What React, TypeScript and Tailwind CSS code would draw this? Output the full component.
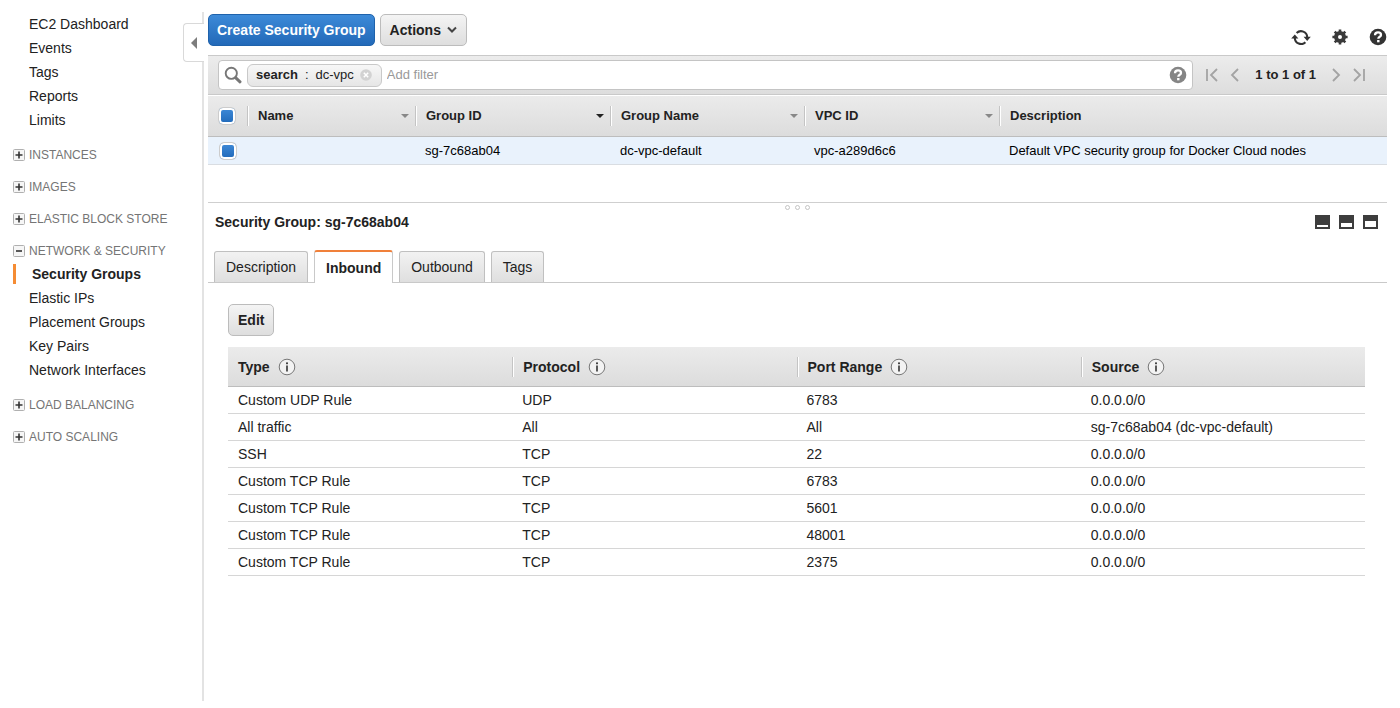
import { useState } from 'react';
import type { ReactNode } from 'react';

const dashboardLinks = ['EC2 Dashboard', 'Events', 'Tags', 'Reports', 'Limits'];

const sections = [
  { title: 'INSTANCES', links: [] },
  { title: 'IMAGES', links: [] },
  { title: 'ELASTIC BLOCK STORE', links: [] },
  {
    title: 'NETWORK & SECURITY',
    links: ['Security Groups', 'Elastic IPs', 'Placement Groups', 'Key Pairs', 'Network Interfaces'],
  },
  { title: 'LOAD BALANCING', links: [] },
  { title: 'AUTO SCALING', links: [] },
];

const groupColumns = [
  { label: 'Name', width: 'w-[168px]', sorted: false },
  { label: 'Group ID', width: 'w-[195px]', sorted: true },
  { label: 'Group Name', width: 'w-[194px]', sorted: false },
  { label: 'VPC ID', width: 'w-[195px]', sorted: false },
  { label: 'Description', width: '', sorted: null },
];

const groupRow = [
  '',
  'sg-7c68ab04',
  'dc-vpc-default',
  'vpc-a289d6c6',
  'Default VPC security group for Docker Cloud nodes',
];

const tabs = ['Description', 'Inbound', 'Outbound', 'Tags'];

const rules = [
  ['Custom UDP Rule', 'UDP', '6783', '0.0.0.0/0'],
  ['All traffic', 'All', 'All', 'sg-7c68ab04 (dc-vpc-default)'],
  ['SSH', 'TCP', '22', '0.0.0.0/0'],
  ['Custom TCP Rule', 'TCP', '6783', '0.0.0.0/0'],
  ['Custom TCP Rule', 'TCP', '5601', '0.0.0.0/0'],
  ['Custom TCP Rule', 'TCP', '48001', '0.0.0.0/0'],
  ['Custom TCP Rule', 'TCP', '2375', '0.0.0.0/0'],
];

const ToggleIcon = ({ open }: { open: boolean }) => (
  <svg width="12" height="12" viewBox="0 0 12 12" fill="none">
    <rect x="0.5" y="0.5" width="11" height="11" rx="1" fill="#f6f6f6" stroke="#b0b0b0" />
    <path d={open ? 'M3 6h6' : 'M2.5 6h7M6 2.5v7'} stroke="#333" strokeWidth="1.6" />
  </svg>
);

const RefreshIcon = () => (
  <svg width="20" height="16" viewBox="0 0 20 16" fill="none">
    <path d="M5.6 4A6.2 6.2 0 0 1 16.2 8.2M14.4 13.2A6.2 6.2 0 0 1 3.8 9" stroke="#333" strokeWidth="2.1" />
    <path d="M12.6 7.8h7.2l-3.6 4.2zM.2 9.6h7.2L3.8 5.4z" fill="#333" />
  </svg>
);

const GearIcon = () => (
  <svg width="16" height="16" viewBox="0 0 16 16" fill="none">
    <circle cx="8" cy="8" r="4" stroke="#3a3a3a" strokeWidth="4" />
    <path
      d="M8 .4v3M8 12.6v3M.4 8h3M12.6 8h3M2.7 2.7l2 2M11.3 11.3l2 2M13.3 2.7l-2 2M4.7 11.3l-2 2"
      stroke="#3a3a3a"
      strokeWidth="2.6"
    />
  </svg>
);

const HelpIcon = ({ color }: { color: string }) => (
  <svg width="18" height="18" viewBox="0 0 18 18" fill="none">
    <circle cx="9" cy="9" r="8.3" fill={color} />
    <path d="M6 7.2C6 5.3 7.3 4.4 9 4.4s3 .9 3 2.5c0 1.9-2.7 1.9-2.7 3.9" stroke="#fff" strokeWidth="2.3" />
    <rect x="8.1" y="12" width="2.4" height="2.3" fill="#fff" />
  </svg>
);

const SearchIcon = () => (
  <svg width="18" height="18" viewBox="0 0 18 18" fill="none" className="shrink-0">
    <circle cx="7.3" cy="7.3" r="5.6" stroke="#777" strokeWidth="1.9" />
    <path d="M11.8 11.8l4.2 4" stroke="#777" strokeWidth="3" strokeLinecap="round" />
  </svg>
);

const InfoIcon = () => (
  <svg width="18" height="18" viewBox="0 0 18 18" fill="none">
    <circle cx="9" cy="9" r="7.8" fill="#f3f3f3" stroke="#777" />
    <path d="M9 7.4v6" stroke="#333" strokeWidth="1.6" />
    <rect x="8.1" y="4.4" width="1.8" height="1.8" fill="#333" />
  </svg>
);

// Panel layout glyph, `top` is where the lower pane starts
const PaneIcon = ({ top }: { top: number }) => (
  <svg width="15" height="14" viewBox="0 0 15 14">
    <path d="M0 0h15v14H0z" fill="#3d3d3d" />
    <path d={`M2 ${top}h11V12H2z`} fill="#fff" />
  </svg>
);

const PageButton = ({ label, d, width }: { label: string; d: string; width: number }) => (
  <button type="button" aria-label={label}>
    <svg width={width} height="14" viewBox={`0 0 ${width} 14`} fill="none" stroke="#a3a3a3" strokeWidth="1.8">
      <path d={d} />
    </svg>
  </button>
);

const Checkbox = ({ label }: { label: string }) => (
  <input
    type="checkbox"
    defaultChecked
    aria-label={label}
    className="block size-[18px] appearance-none rounded-[5px] border border-[#cccccc] bg-white shadow-[inset_0_0_0_2px_#fff] checked:bg-linear-to-b checked:from-[#3f8bd9] checked:to-[#1f68b8]"
  />
);

// Grey gradient header cell with the etched divider on its left edge
const HeadLabel = ({ children, divider }: { children: ReactNode; divider: boolean }) => (
  <div
    className={`flex h-5 items-center ${
      divider ? 'border-l border-[#c4c4c4] pl-[10px] shadow-[inset_1px_0_0_#fff]' : 'pl-[10px]'
    }`}
  >
    {children}
  </div>
);

const Sidebar = () => {
  const [collapsed, setCollapsed] = useState<string[]>([]);

  return (
    <aside className="relative w-[204px] shrink-0 border-r-2 border-[#e3e3e3]">
      <nav>
        <ul className="pb-[2px] pl-[29px]">
          {dashboardLinks.map((item) => (
            <li key={item} className="h-6 leading-6">
              <a href="#">{item}</a>
            </li>
          ))}
        </ul>
        {sections.map(({ title, links }) => {
          const open = links.length > 0 && !collapsed.includes(title);
          return (
            <div key={title} className="pt-[10px]">
              <button
                type="button"
                onClick={() => setCollapsed(open ? [...collapsed, title] : collapsed.filter((t) => t !== title))}
                className="flex h-[22px] items-center gap-1 pl-[13px] text-[12px] text-[#757575]"
              >
                <ToggleIcon open={open} />
                {title}
              </button>
              {open && (
                <ul className="pb-[2px]">
                  {links.map((item) =>
                    item === 'Security Groups' ? (
                      <li key={item} className="flex h-6 items-center pl-[13px]">
                        <a href="#" className="border-l-3 border-[#f58c34] pl-4 leading-5 font-bold">
                          {item}
                        </a>
                      </li>
                    ) : (
                      <li key={item} className="h-6 pl-[29px] leading-6">
                        <a href="#">{item}</a>
                      </li>
                    ),
                  )}
                </ul>
              )}
            </div>
          );
        })}
      </nav>
      <button
        type="button"
        aria-label="Collapse sidebar"
        className="absolute top-[11px] -right-[2px] flex h-[39px] w-[21px] items-center justify-center rounded-l-[4px] border border-r-0 border-[#d9d9d9] bg-white"
      >
        <svg width="6" height="12" viewBox="0 0 6 12">
          <path d="M6 0v12L0 6z" fill="#7d7d7d" />
        </svg>
      </button>
    </aside>
  );
};

const FilterBar = () => (
  <div className="mt-[9px] flex h-10 items-center border-y border-[#c9c9c9] bg-linear-to-b from-[#ececec] to-[#dddddd] pr-[22px] pl-[10px]">
    <div className="flex h-[30px] flex-1 items-center rounded-[4px] border border-[#c4c4c4] bg-white pr-[5px] pl-[5px] text-[13px]">
      <SearchIcon />
      <span className="ml-[5px] flex h-[23px] shrink-0 items-center rounded-[6px] border border-[#c9c9c9] bg-linear-to-b from-[#f7f7f7] to-[#e6e6e6] pr-[9px] pl-2">
        <b>search</b>
        <span className="px-[7px]">:</span>
        dc-vpc
        <button type="button" aria-label="Remove filter" className="ml-[6px]">
          <svg width="12" height="12" viewBox="0 0 12 12" fill="none">
            <circle cx="6" cy="6" r="5.8" fill="#d2d2d2" />
            <path d="M3.8 3.8l4.4 4.4M8.2 3.8L3.8 8.2" stroke="#fff" strokeWidth="1.5" />
          </svg>
        </button>
      </span>
      <input
        type="text"
        aria-label="Add filter"
        placeholder="Add filter"
        className="ml-[5px] min-w-0 flex-1 outline-none placeholder:text-[#999]"
      />
      <button type="button" aria-label="Filter help">
        <HelpIcon color="#858585" />
      </button>
    </div>
    <div className="ml-[13px] flex items-center text-[13px] font-bold">
      <PageButton label="First page" width={12} d="M1 1v12M11 1L5 7l6 6" />
      <span className="ml-3 flex">
        <PageButton label="Previous page" width={10} d="M8 1L2 7l6 6" />
      </span>
      <span className="mx-[15px]">1 to 1 of 1</span>
      <PageButton label="Next page" width={10} d="M2 1l6 6-6 6" />
      <span className="ml-3 flex">
        <PageButton label="Last page" width={12} d="M1 1l6 6-6 6M11 1v12" />
      </span>
    </div>
  </div>
);

const GroupTable = () => (
  <table className="mt-px w-full table-fixed border-separate border-spacing-0 text-left text-[13px]">
    <thead>
      <tr className="h-[41px] bg-linear-to-b from-[#ebebeb] to-[#dcdcdc]">
        <th className="w-[39px] border-b border-[#bdbdbd] pl-[10px]">
          <Checkbox label="Select all" />
        </th>
        {groupColumns.map(({ label, width, sorted }) => (
          <th key={label} className={`border-b border-[#bdbdbd] ${width}`}>
            <HeadLabel divider>
              <span className="flex-1">{label}</span>
              {sorted !== null && (
                <svg width="8" height="4" viewBox="0 0 8 4" className="mr-[6px]">
                  <path d="M0 0h8L4 4z" fill={sorted ? '#222' : '#888'} />
                </svg>
              )}
            </HeadLabel>
          </th>
        ))}
      </tr>
    </thead>
    <tbody>
      <tr className="h-7 bg-[#e9f2fc] text-black">
        <td className="border-b border-[#d9dde2] pl-[11px]">
          <Checkbox label="Select sg-7c68ab04" />
        </td>
        {groupRow.map((cell, i) => (
          <td key={i} className="border-b border-[#d9dde2] pl-[10px]">
            {cell}
          </td>
        ))}
      </tr>
    </tbody>
  </table>
);

const RulesTable = () => (
  <table className="mt-[11px] w-full table-fixed border-separate border-spacing-0 text-left">
    <thead>
      <tr className="h-10 bg-linear-to-b from-[#ebebeb] to-[#dcdcdc]">
        {['Type', 'Protocol', 'Port Range', 'Source'].map((label, i) => (
          <th key={label} className="w-1/4 border-b border-[#bdbdbd]">
            <HeadLabel divider={i > 0}>
              <span className="mr-2">{label}</span>
              <InfoIcon />
            </HeadLabel>
          </th>
        ))}
      </tr>
    </thead>
    <tbody>
      {rules.map((rule, i) => (
        <tr key={i} className="h-[27px]">
          {rule.map((cell, j) => (
            <td key={j} className="border-b border-[#d6d6d6] pl-[10px] leading-5">
              {cell}
            </td>
          ))}
        </tr>
      ))}
    </tbody>
  </table>
);

export default function App() {
  const [active, setActive] = useState('Inbound');

  return (
    <div className="flex min-h-screen bg-white pt-3 pr-[13px] pb-[7px] font-['Liberation_Sans',Arial,sans-serif] text-[14px] leading-5 text-[#222]">
      <Sidebar />
      <main className="ml-1 min-w-0 flex-1 pt-[2px]">
        {/* Toolbar */}
        <div className="flex h-8 items-center gap-[5px]">
          <button
            type="button"
            className="h-8 rounded-[5px] border border-[#1f62ab] bg-linear-to-b from-[#3d8ad8] to-[#2269b8] px-2 font-bold text-white"
          >
            Create Security Group
          </button>
          <button
            type="button"
            className="flex h-8 items-center gap-[6px] rounded-[5px] border border-[#bcbcbc] bg-linear-to-b from-[#f4f4f4] to-[#dedede] px-[9px] font-bold"
          >
            Actions
            <svg width="10" height="8" viewBox="0 0 10 8" fill="none">
              <path d="M1 1.5l4 4 4-4" stroke="#444" strokeWidth="2" />
            </svg>
          </button>
          <div className="ml-auto flex items-center gap-[21px] self-end">
            <button type="button" aria-label="Refresh">
              <RefreshIcon />
            </button>
            <button type="button" aria-label="Settings">
              <GearIcon />
            </button>
            <button type="button" aria-label="Help">
              <HelpIcon color="#333" />
            </button>
          </div>
        </div>

        <FilterBar />
        <GroupTable />

        {/* Split pane handle */}
        <div className="mt-[37px] flex h-[10px] items-center justify-center gap-[5px] border-t border-[#cfcfcf]">
          {[0, 1, 2].map((i) => (
            <span key={i} className="size-[5px] rounded-full border border-[#c4c4c4]" />
          ))}
        </div>

        <div className="flex h-5 items-center justify-between pr-[9px] pl-[7px]">
          <h2 className="font-bold">Security Group: sg-7c68ab04</h2>
          <div className="flex gap-[9px]">
            <button type="button" aria-label="Small details pane">
              <PaneIcon top={10} />
            </button>
            <button type="button" aria-label="Medium details pane">
              <PaneIcon top={8} />
            </button>
            <button type="button" aria-label="Large details pane">
              <PaneIcon top={6} />
            </button>
          </div>
        </div>

        <div role="tablist" className="mt-[18px] flex items-end gap-[6px] border-b border-[#c9c9c9] pl-[6px]">
          {tabs.map((tab) => (
            <button
              key={tab}
              type="button"
              role="tab"
              aria-selected={tab === active}
              onClick={() => setActive(tab)}
              className={
                tab === active
                  ? '-mb-px h-[33px] rounded-t-[3px] border-x border-t-2 border-x-[#c9c9c9] border-t-[#f0803a] bg-white px-[11px] font-bold'
                  : 'h-[31px] rounded-t-[3px] border border-b-0 border-[#c0c0c0] bg-linear-to-b from-[#f2f2f2] to-[#dfdfdf] px-[11px]'
              }
            >
              {tab}
            </button>
          ))}
        </div>

        <div className="pt-[21px] pr-[22px] pl-5">
          <button
            type="button"
            className="block h-8 rounded-[5px] border border-[#bcbcbc] bg-linear-to-b from-[#f4f4f4] to-[#dedede] px-[9px] font-bold"
          >
            Edit
          </button>
          <RulesTable />
        </div>
      </main>
    </div>
  );
}
